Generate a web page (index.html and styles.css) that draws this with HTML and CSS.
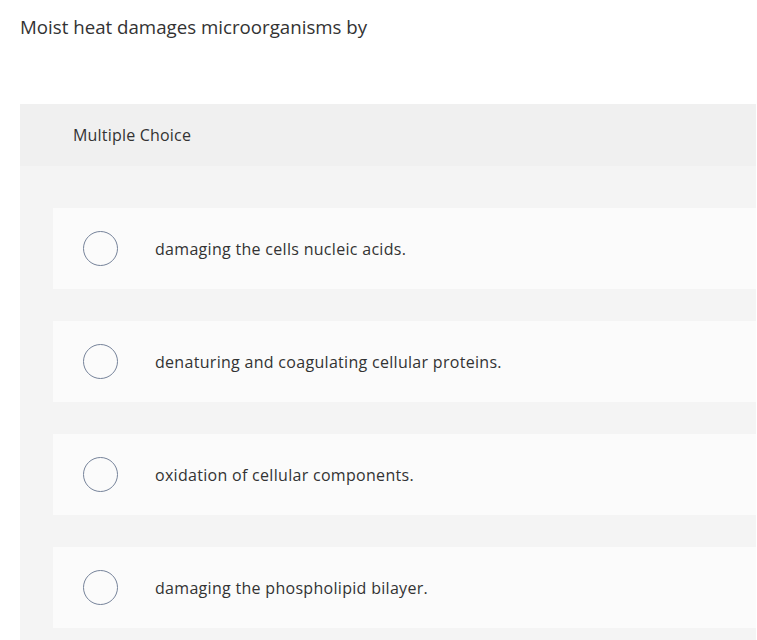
FILE: index.html
```html
<!DOCTYPE html>
<html>
<head>
<meta charset="utf-8">
<link rel="stylesheet" href="styles.css">
</head>
<body>
<p class="question">Moist heat damages microorganisms by</p>
<section class="panel">
  <div class="panel-header">Multiple Choice</div>
  <div class="options">
    <label class="option"><span class="radio"></span><span class="option-text">damaging the cells nucleic acids.</span></label>
    <label class="option"><span class="radio"></span><span class="option-text">denaturing and coagulating cellular proteins.</span></label>
    <label class="option"><span class="radio"></span><span class="option-text">oxidation of cellular components.</span></label>
    <label class="option"><span class="radio"></span><span class="option-text">damaging the phospholipid bilayer.</span></label>
  </div>
</section>
</body>
</html>
```
FILE: styles.css
```css
html, body {
  margin: 0;
  padding: 0;
  background: #ffffff;
}
body {
  padding: 0 1px 0 20px;
  font-family: "Open Sans", "Liberation Sans", sans-serif;
  color: #333333;
  overflow: hidden;
}
.question {
  margin: 0;
  padding-top: 15px;
  font-size: 18.7px;
  line-height: 24px;
  height: 89px;
  color: #333333;
}
.panel {
  background: #f4f4f4;
  min-height: 560px;
}
.panel-header {
  background: #f0f0f0;
  height: 62px;
  box-sizing: border-box;
  padding: 21px 0 0 53px;
  font-size: 16px;
  letter-spacing: 0.2px;
  line-height: 20px;
  color: #333333;
}
.options {
  display: flex;
  flex-direction: column;
  gap: 32px;
  padding: 42px 0 0 33px;
}
.option {
  display: flex;
  align-items: center;
  height: 81px;
  background: #fbfbfb;
  padding-left: 30px;
}
.radio {
  width: 33px;
  height: 33px;
  border: 1.5px solid #76839a;
  border-radius: 50%;
  flex: none;
}
.option-text {
  margin-left: 37px;
  font-size: 16px;
  letter-spacing: 0.3px;
  color: #333333;
}
```
